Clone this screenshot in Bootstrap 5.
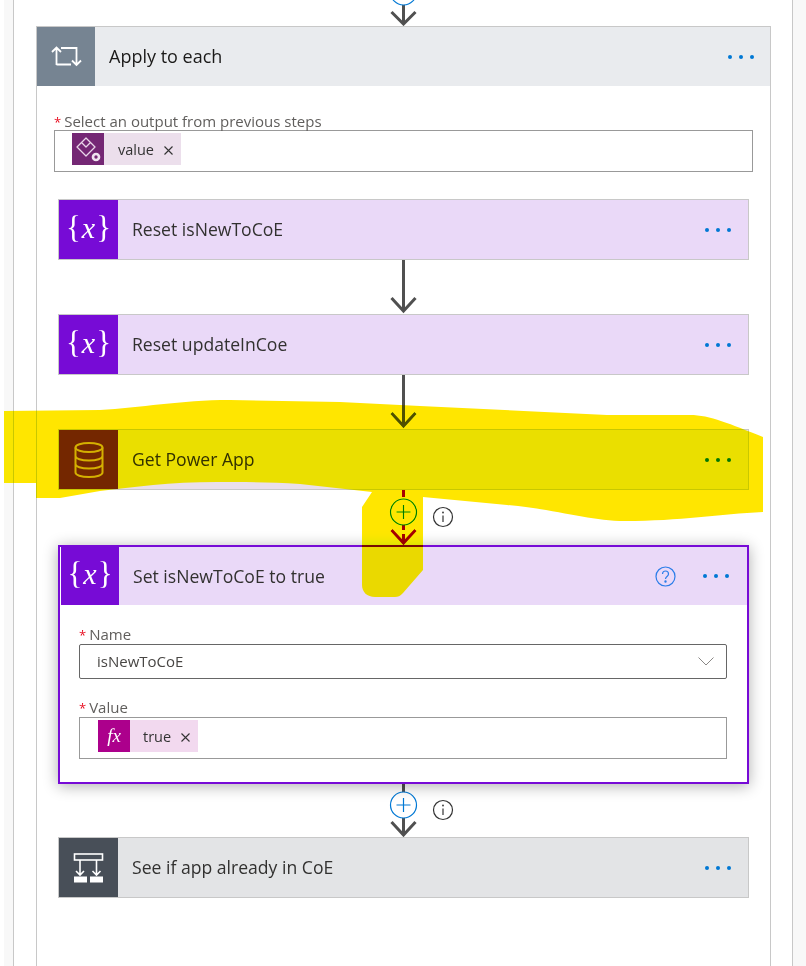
<!DOCTYPE html>
<html lang="en">
<head>
    <meta charset="UTF-8">
    <meta name="viewport" content="width=device-width, initial-scale=1.0">
    <title>Apply to each</title>
    <link href="https://cdn.jsdelivr.net/npm/bootstrap@5.3.0/dist/css/bootstrap.min.css" rel="stylesheet">
    <style>
        html, body { background: #fff; }
        body { font-family: "Open Sans", "Liberation Sans", sans-serif; color: #252423; position: relative; width: 806px; height: 966px; overflow: hidden; }
        .page-frame { height: 966px; }
        .side-left { width: 10px; margin-left: 4px; background: #f8f8f8; border-right: 1px solid #c8c8c8; }
        .side-right { background: #f8f8f8; border-left: 1px solid #c8c8c8; }
        .flow-main { width: 778px; padding-left: 22px; padding-right: 21px; }
        .connector { display: block; margin: 0 auto; width: 121px; }
        .loop-box { border: 1px solid #c8c8c8; border-bottom: 0; height: 940px; }
        .loop-head { height: 59px; background: #e9ebee; }
        .loop-icon { width: 58px; height: 59px; background: #768492; }
        .loop-title { font-size: 18px; margin-left: 14px; color: #1b1a19; }
        .loop-dots { margin-right: 16px; }
        .loop-body { padding: 26px 0 0; }
        .field-outer { margin: 0 17px 27px; }
        .field-label { font-size: 15px; line-height: 18px; height: 18px; color: #605e5c; }
        .selected-fields .field-label { margin-top: -1px; margin-bottom: 1px; }
        .req { color: #e81123; font-size: 13px; margin-right: 3px; }
        .token-box { height: 42px; border: 1px solid #999; padding: 2px 0 0 17px; background: #fff; }
        .token { height: 32px; }
        .token-icon { width: 32px; height: 32px; }
        .token-text { font-size: 14.5px; color: #333; margin-left: 14px; padding-top: 2px; }
        .token-x { margin: 2px 8px 0 10px; }
        .token-value { background: #ecdfec; }
        .token-value .token-icon { background: #742774; }
        .token-fx { background: #f2d9ef; }
        .token-fx .token-icon { background: #ac008c; color: #fff; font-family: "Liberation Serif", serif; font-style: italic; font-size: 19px; }
        .token-fx .token-text { margin-left: 13px; }
        .step-card { height: 61px; margin: 0 21px; border: 1px solid #c8c8c8; }
        .step-purple { background: #ead9f8; }
        .step-data { background: #eadfea; }
        .step-cond { background: #e3e4e6; }
        .step-icon { width: 59px; height: 59px; }
        .icon-var { background: #770bd6; color: #fff; }
        .icon-data { background: #742774; }
        .icon-cond { background: #484f58; }
        .var-brace { font-family: "Liberation Serif", serif; font-size: 31px; line-height: 1; margin-top: -5px; }
        .var-x { font-family: "Liberation Serif", serif; font-style: italic; font-size: 30px; line-height: 1; margin: -4px 1px 0; }
        .step-title { font-size: 17.6px; margin-left: 14px; color: #323130; }
        .step-dots { margin-right: 17px; }
        .more-dots { gap: 7px; }
        .more-dots span { width: 4px; height: 4px; border-radius: 50%; background: #0078d4; }
        .step-selected { height: 239px; margin: 0 21px; border: 2px solid #770bd6; background: #fff; box-shadow: 0 2px 14px rgba(0, 0, 0, .32); position: relative; }
        .selected-head { height: 58px; background: #ead9f8; margin-left: 1px; }
        .selected-head .step-icon { width: 58px; height: 58px; }
        .help-icon { margin-right: 27px; }
        .selected-dots { margin-right: 18px; }
        .selected-fields { padding: 21px 20px 0 19px; }
        .name-select { height: 35px; border: 1px solid #666; border-radius: 2px; padding: 0 12px 0 17px; font-size: 15px; color: #484644; }
        .field-gap { height: 20px; }
        .selected-fields .token-box { padding-left: 18px; }
        .highlight-layer { position: absolute; left: 0; top: 0; mix-blend-mode: darken; pointer-events: none; }
    </style>
</head>
<body class="m-0">
    <div class="page-frame d-flex">
        <div class="side-left flex-shrink-0"></div>
        <div class="flow-main flex-shrink-0">
            <svg class="connector" height="26" viewBox="0 0 121 26">
                <path d="M60.500 0V24M48.500 12L60.500 24L72.500 12" fill="none" stroke="#505050" stroke-width="3"/>
                <circle cx="60.500" cy="-8" r="13" fill="#fff" stroke="#0078d4" stroke-width="1.200"/>
            </svg>
            <div class="loop-box">
                <div class="loop-head d-flex align-items-center">
                    <div class="loop-icon d-flex align-items-center justify-content-center flex-shrink-0">
                        <svg width="58" height="59" viewBox="0 0 58 59" fill="none" stroke="#fff" stroke-width="1.800">
                            <path d="M19.500 38V21M15 25L19.500 20.500L24 25M19.500 37.500H34M24 21H39.500V38M35 33.500L39.500 38L44 33.500"/>
                        </svg>
                    </div>
                    <div class="loop-title flex-grow-1">Apply to each</div>
                    <div class="more-dots loop-dots d-flex"><span></span><span></span><span></span></div>
                </div>
                <div class="loop-body">
                    <div class="field-outer">
                        <div class="field-label"><span class="req">*</span>Select an output from previous steps</div>
                        <div class="token-box">
                            <div class="token token-value d-inline-flex align-items-center">
                                <div class="token-icon d-flex align-items-center justify-content-center">
                                    <svg width="32" height="32" viewBox="0 0 32 32" fill="none" stroke="#e9d6e9" stroke-width="1.300" stroke-linejoin="round">
                                        <path d="M14 5L23 14L14 23L5 14Z M9.500 9.500L14 14L18.500 9.500"/>
                                        <circle cx="24" cy="24" r="5" fill="#f0e4f0" stroke="#742774"/>
                                        <circle cx="24" cy="24" r="1.700" fill="#742774" stroke="none"/>
                                    </svg>
                                </div>
                                <span class="token-text">value</span>
                                <svg class="token-x" width="9" height="9" viewBox="0 0 9 9" stroke="#333" stroke-width="1.100"><path d="M.5 .5L8.500 8.500M8.500 .5L.5 8.500"/></svg>
                            </div>
                        </div>
                    </div>

                    <div class="step-card step-purple d-flex align-items-center">
                        <div class="step-icon icon-var d-flex align-items-center justify-content-center flex-shrink-0"><span class="var-brace">{</span><span class="var-x">x</span><span class="var-brace">}</span></div>
                        <div class="step-title flex-grow-1">Reset isNewToCoE</div>
                        <div class="more-dots step-dots d-flex"><span></span><span></span><span></span></div>
                    </div>
                    <svg class="connector" height="54" viewBox="0 0 121 54">
                        <path d="M60.500 0V51M48.500 38L60.500 51L72.500 38" fill="none" stroke="#505050" stroke-width="3"/>
                    </svg>
                    <div class="step-card step-purple d-flex align-items-center">
                        <div class="step-icon icon-var d-flex align-items-center justify-content-center flex-shrink-0"><span class="var-brace">{</span><span class="var-x">x</span><span class="var-brace">}</span></div>
                        <div class="step-title flex-grow-1">Reset updateInCoe</div>
                        <div class="more-dots step-dots d-flex"><span></span><span></span><span></span></div>
                    </div>
                    <svg class="connector" height="54" viewBox="0 0 121 54">
                        <path d="M60.500 0V51M48.500 38L60.500 51L72.500 38" fill="none" stroke="#505050" stroke-width="3"/>
                    </svg>
                    <div class="step-card step-data d-flex align-items-center">
                        <div class="step-icon icon-data d-flex align-items-center justify-content-center flex-shrink-0">
                            <svg width="59" height="59" viewBox="0 0 59 59" fill="none" stroke="#d4b000" stroke-width="2">
                                <ellipse cx="30" cy="17.500" rx="13.500" ry="4.500"/>
                                <path d="M16.500 17.500V42.500C16.500 45 22 47 30 47S43.500 45 43.500 42.500V17.500M16.500 26C16.500 28.500 22 30.500 30 30.500S43.500 28.500 43.500 26M16.500 34C16.500 36.500 22 38.500 30 38.500S43.500 36.500 43.500 34"/>
                            </svg>
                        </div>
                        <div class="step-title flex-grow-1">Get Power App</div>
                        <div class="more-dots step-dots d-flex"><span></span><span></span><span></span></div>
                    </div>
                    <svg class="connector" height="55" viewBox="0 0 121 55">
                        <path d="M60.500 0V54" fill="none" stroke="#a80000" stroke-width="3" stroke-dasharray="7 4"/>
                        <path d="M48.500 40L60.500 53L72.500 40" fill="none" stroke="#a80000" stroke-width="3"/>
                        <circle cx="60.500" cy="22" r="13" fill="#fff" stroke="#0078d4" stroke-width="1.200"/>
                        <path d="M60.500 15V29M53.500 22H67.500" stroke="#0078d4" stroke-width="1.200"/>
                        <circle cx="100" cy="27" r="9.500" fill="#fff" stroke="#333" stroke-width="1.200"/>
                        <path d="M100 25.500V32" stroke="#333" stroke-width="1.200"/>
                        <circle cx="100" cy="22.500" r=".9" fill="#333"/>
                    </svg>
                    <div class="step-selected">
                        <div class="selected-head d-flex align-items-center">
                            <div class="step-icon icon-var d-flex align-items-center justify-content-center flex-shrink-0"><span class="var-brace">{</span><span class="var-x">x</span><span class="var-brace">}</span></div>
                            <div class="step-title flex-grow-1">Set isNewToCoE to true</div>
                            <svg class="help-icon" width="21" height="21" viewBox="0 0 21 21" fill="none" stroke="#2b7de9" stroke-width="1.200">
                                <circle cx="10.500" cy="10.500" r="9.500"/>
                                <path d="M7.500 8C7.500 6 9 5 10.500 5S13.500 6 13.500 8C13.500 10.500 10.500 10.500 10.500 13"/>
                                <circle cx="10.500" cy="15.500" r=".6" fill="#2b7de9"/>
                            </svg>
                            <div class="more-dots selected-dots d-flex"><span></span><span></span><span></span></div>
                        </div>
                        <div class="selected-fields">
                            <div class="field-label"><span class="req">*</span>Name</div>
                            <div class="name-select d-flex align-items-center justify-content-between">
                                <span>isNewToCoE</span>
                                <svg width="16" height="9" viewBox="0 0 16 9" fill="none" stroke="#8a8886" stroke-width="1"><path d="M.5 .5L8 8L15.500 .5"/></svg>
                            </div>
                            <div class="field-gap"></div>
                            <div class="field-label"><span class="req">*</span>Value</div>
                            <div class="token-box">
                                <div class="token token-fx d-inline-flex align-items-center">
                                    <div class="token-icon d-flex align-items-center justify-content-center">fx</div>
                                    <span class="token-text">true</span>
                                    <svg class="token-x" width="9" height="9" viewBox="0 0 9 9" stroke="#333" stroke-width="1.100"><path d="M.5 .5L8.500 8.500M8.500 .5L.5 8.500"/></svg>
                                </div>
                            </div>
                        </div>
                    </div>
                    <svg class="connector" height="53" viewBox="0 0 121 53">
                        <path d="M60.500 0V51M48.500 38L60.500 51L72.500 38" fill="none" stroke="#505050" stroke-width="3"/>
                        <circle cx="60.500" cy="21" r="13" fill="#fff" stroke="#0078d4" stroke-width="1.200"/>
                        <path d="M60.500 14V28M53.500 21H67.500" stroke="#0078d4" stroke-width="1.200"/>
                        <circle cx="100" cy="26" r="9.500" fill="#fff" stroke="#333" stroke-width="1.200"/>
                        <path d="M100 24.500V31" stroke="#333" stroke-width="1.200"/>
                        <circle cx="100" cy="21.500" r=".9" fill="#333"/>
                    </svg>
                    <div class="step-card step-cond d-flex align-items-center">
                        <div class="step-icon icon-cond d-flex align-items-center justify-content-center flex-shrink-0">
                            <svg width="59" height="59" viewBox="0 0 59 59" fill="none" stroke="#fff" stroke-width="1.600">
                                <rect x="15.500" y="16" width="28" height="6"/>
                                <path d="M21 22V37M17 33L21 37L25 33M37.500 22V37M33.500 33L37.500 37L41.500 33"/>
                                <rect x="15" y="38.500" width="13" height="6" fill="#fff" stroke="none"/>
                                <rect x="31" y="38.500" width="13" height="6" fill="#fff" stroke="none"/>
                            </svg>
                        </div>
                        <div class="step-title flex-grow-1">See if app already in CoE</div>
                        <div class="more-dots step-dots d-flex"><span></span><span></span><span></span></div>
                    </div>
                </div>
            </div>
        </div>
        <div class="side-right flex-grow-1"></div>
    </div>

    <!-- highlighter scribble on top of the flow -->
    <svg class="highlight-layer" width="806" height="966" viewBox="0 0 806 966">
        <path fill="#ffe600" d="M4 411L100 410C140 408 180 400 230 400L340 402L420 406L607 415H690C710 415 730 424 763 437V512C720 514 680 521 625 521C590 521 560 510 507 505L423 497V570L403 593C400 596 398 597 395 597H375C367 597 362 592 362 585V507L372 492L300 484C270 482 240 482 217 482C170 482 133 487 100 491L60 498H36V483L4 483Z"/>
    </svg>
</body>
</html>
